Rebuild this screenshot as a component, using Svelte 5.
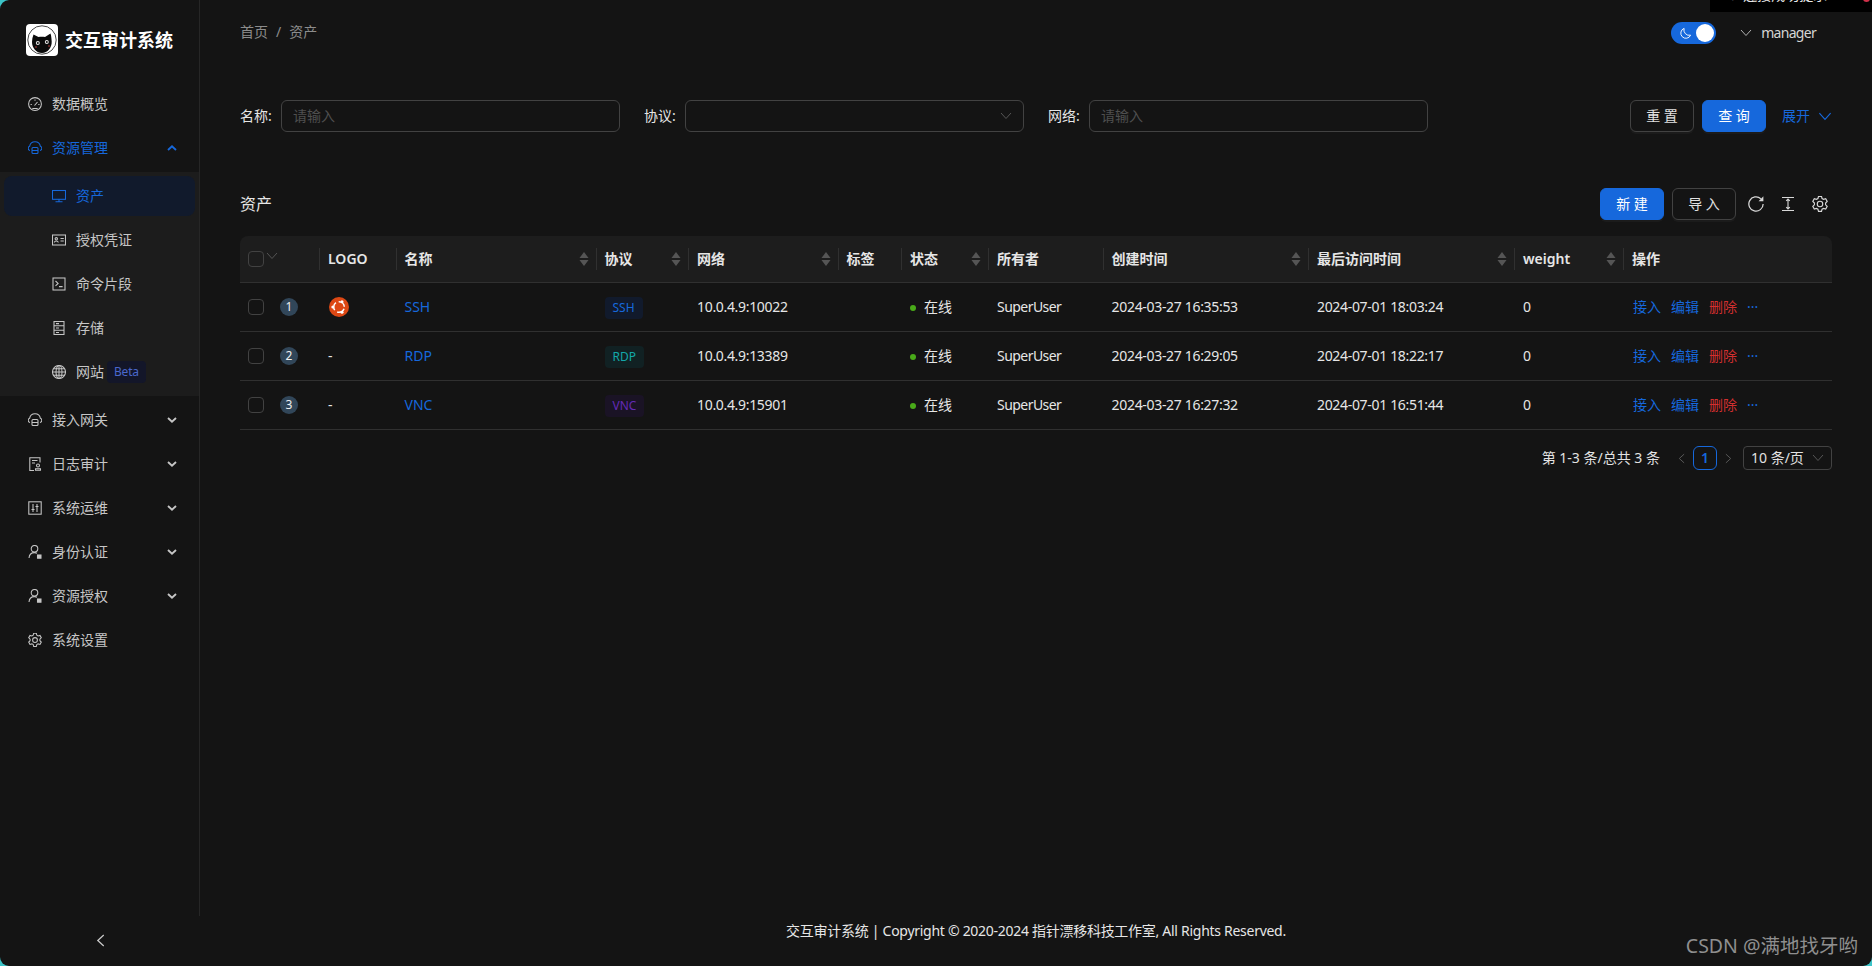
<script>
  const sub = [
    { label: '资产', icon: 'desktop', active: true },
    { label: '授权凭证', icon: 'idcard' },
    { label: '命令片段', icon: 'code' },
    { label: '存储', icon: 'storage' },
    { label: '网站', icon: 'globe', beta: true }
  ];
  const lower = [
    { label: '接入网关', icon: 'cloud', arrow: true },
    { label: '日志审计', icon: 'audit', arrow: true },
    { label: '系统运维', icon: 'control', arrow: true },
    { label: '身份认证', icon: 'user', arrow: true },
    { label: '资源授权', icon: 'user', arrow: true },
    { label: '系统设置', icon: 'gear' }
  ];
  const cols = [
    { w: 80, t: '' },
    { w: 76.5, t: 'LOGO' },
    { w: 200, t: '名称', s: 1 },
    { w: 92.5, t: '协议', s: 1 },
    { w: 149.5, t: '网络', s: 1 },
    { w: 63.5, t: '标签' },
    { w: 87, t: '状态', s: 1 },
    { w: 114.6, t: '所有者' },
    { w: 205.4, t: '创建时间', s: 1 },
    { w: 206, t: '最后访问时间', s: 1 },
    { w: 109, t: 'weight', s: 1 },
    { w: 208, t: '操作' }
  ];
  const rows = [
    { n: 1, name: 'SSH', logo: true, cls: 'ssh', addr: '10.0.4.9:10022', c: '2024-03-27 16:35:53', l: '2024-07-01 18:03:24' },
    { n: 2, name: 'RDP', cls: 'rdp', addr: '10.0.4.9:13389', c: '2024-03-27 16:29:05', l: '2024-07-01 18:22:17' },
    { n: 3, name: 'VNC', cls: 'vnc', addr: '10.0.4.9:15901', c: '2024-03-27 16:27:32', l: '2024-07-01 16:51:44' }
  ];
  const gearPath = 'M6.700 1.300h2.600l.5 1.900 1.300.7 1.900-.5 1.300 2.300-1.400 1.400v1.600l1.400 1.400-1.300 2.300-1.900-.5-1.300.7-.5 1.900H6.700l-.5-1.900-1.300-.7-1.900.5-1.300-2.300 1.400-1.400V7.100L1.700 5.700 3 3.400l1.900.5 1.300-.7z';
</script>

{#snippet icon(name)}
  <svg class="ic" viewBox="1 1 14 14" fill="none" stroke="currentColor" stroke-width="1.050">
    {#if name === 'gauge'}
      <circle cx="8" cy="8" r="6.400" /><path d="M7.500 9.500l3-3.500M3.600 8.500h1.200M11.300 8.500h1.200M8 3.500v1.200M5.300 12.500h5.400" />
    {:else if name === 'cloud'}
      <path d="M3 10.500a2.200 2.200 0 0 1-.4-4.200 5.500 5.500 0 0 1 10.800 0 2.200 2.200 0 0 1-.4 4.200" /><rect x="5" y="7.500" width="6" height="6" rx="1" /><path d="M5 10.500h6" />
    {:else if name === 'desktop'}
      <rect x="1.500" y="2.500" width="13" height="8.800" /><path d="M8 11.300v2.500M4.500 13.800h7" />
    {:else if name === 'idcard'}
      <rect x="1.500" y="3" width="13" height="10" /><circle cx="5.300" cy="6.800" r="1.200" /><path d="M3.300 10.500c.3-2 3.700-2 4 0M9.500 6.500h3.300M9.500 9h3.300" />
    {:else if name === 'code'}
      <rect x="2" y="2" width="12" height="12" /><path d="M4.500 5l2.600 2.400-2.600 2.400M8 10.600h3.600" />
    {:else if name === 'storage'}
      <rect x="3" y="1.500" width="10" height="13" /><path d="M3 5.800h10M3 10.200h10M5 3.600h3M5 8h3M5 12.400h3" />
    {:else if name === 'globe'}
      <circle cx="8" cy="8" r="6.500" /><ellipse cx="8" cy="8" rx="3" ry="6.500" /><path d="M1.500 8h13M2.400 4.800h11.200M2.400 11.200h11.200M8 1.500v13" />
    {:else if name === 'audit'}
      <path d="M13 6.500V1.800H2.800v12.700H7" /><path d="M5 4.500h5.500M5 7h3" /><circle cx="11" cy="9.500" r="1.500" /><path d="M8.500 14.300v-1.500h5v1.500z" />
    {:else if name === 'control'}
      <rect x="1.800" y="1.800" width="12.400" height="12.400" /><path d="M6 4v8M10 4v8M4.500 9.500h3M8.500 6.500h3" />
    {:else if name === 'user'}
      <circle cx="7.500" cy="4.800" r="3.300" /><path d="M2 14c.3-3.400 2.700-5.400 5.500-5.400 1 0 1.800.2 2.500.6" /><rect x="10.500" y="11" width="3.500" height="3.200" fill="currentColor" />
    {:else if name === 'gear'}
      <circle cx="8" cy="8" r="2.400" /><path d={gearPath} />
    {/if}
  </svg>
{/snippet}

{#snippet chevron(up)}
  <svg class="arrow" viewBox="0 0 10 6" fill="none" stroke="currentColor" stroke-width="1.900">
    <path d={up ? 'M1 5l4-3.600L9 5' : 'M1 1l4 3.600L9 1'} />
  </svg>
{/snippet}

{#snippet down(cls)}
  <svg class={cls} viewBox="0 0 12 8" fill="none" stroke="currentColor" stroke-width="1">
    <path d="M1 1l5 5.500L11 1" />
  </svg>
{/snippet}

<div class="app">
  <aside class="side">
    <div class="side-top">
      <div class="brand">
        <span class="logo">
          <svg viewBox="0 0 32 32" width="32" height="32">
            <circle cx="16" cy="16" r="14.200" fill="#fff" stroke="#333" stroke-width="0.900" />
            <path d="M7.500 10.500l5 2.500c2-.5 4.500-.5 6.500 0l5.500-3.500c1 3 1 6 1.200 8 .3 6-4 11.500-9.700 11.500S6 24 6 18c0-2.500.5-5 1.500-7.500z" fill="#0a0a0a" />
            <circle cx="11.800" cy="19" r="2" fill="#e8e8e8" /><circle cx="20.800" cy="18" r="2" fill="#e8e8e8" />
            <circle cx="11.800" cy="19" r="1" fill="#111" /><circle cx="20.800" cy="18" r="1" fill="#111" />
            <circle cx="10" cy="23" r="1" fill="#7a2a2a" /><circle cx="23" cy="22" r="1" fill="#7a2a2a" />
          </svg>
        </span>
        <span class="title">交互审计系统</span>
      </div>
      <nav class="nav">
        <div class="item">{@render icon('gauge')}<span>数据概览</span></div>
        <div class="item open">{@render icon('cloud')}<span>资源管理</span>{@render chevron(true)}</div>
        <div class="sub">
          {#each sub as s}
            <div class="item subitem" class:active={s.active}>
              {@render icon(s.icon)}<span>{s.label}</span>
              {#if s.beta}<span class="beta">Beta</span>{/if}
            </div>
          {/each}
        </div>
        {#each lower as m}
          <div class="item">
            {@render icon(m.icon)}<span>{m.label}</span>
            {#if m.arrow}{@render chevron(false)}{/if}
          </div>
        {/each}
      </nav>
    </div>
    <div class="collapse">
      <svg viewBox="0 0 8 12" width="9" height="13" fill="none" stroke="#c8c8c8" stroke-width="1.200"><path d="M7 1L1.500 6 7 11" /></svg>
    </div>
  </aside>

  <main class="main">
    <header class="top">
      <div class="crumb"><span>首页</span><span class="slash">/</span><span>资产</span></div>
      <div class="user">
        <span class="switch">
          <svg viewBox="0 0 14 14" width="13" height="13" fill="none" stroke="#fff" stroke-width="1"><path d="M5.500 1.500a5.500 5.500 0 1 0 7 7.300A5.800 5.800 0 0 1 5.500 1.500z" /></svg>
          <span class="knob"></span>
        </span>
        {@render down('uchev')}
        <span class="uname">manager</span>
      </div>
    </header>

    <form class="filters">
      <div class="field"><label for="f1">名称:</label><div id="f1" class="input ph">请输入</div></div>
      <div class="field"><label for="f2">协议:</label><div id="f2" class="input sel">{@render down('schev')}</div></div>
      <div class="field"><label for="f3">网络:</label><div id="f3" class="input ph">请输入</div></div>
      <div class="factions">
        <button type="button" class="btn">重 置</button>
        <button type="button" class="btn primary">查 询</button>
        <span class="expand">展开 {@render down('echev')}</span>
      </div>
    </form>

    <div class="toolbar">
      <span class="ttl">资产</span>
      <div class="tools">
        <button type="button" class="btn primary">新 建</button>
        <button type="button" class="btn">导 入</button>
        <svg class="tool" viewBox="1.500 1.500 13 13" fill="none" stroke="#d8d8d8" stroke-width="1"><path d="M13.800 8a5.800 5.800 0 1 1-1.900-4.300" /><path d="M14 1.800v3.900h-3.900z" fill="#d8d8d8" stroke-width="0" /></svg>
        <svg class="tool" viewBox="0 0 16 16" fill="none" stroke="#d8d8d8" stroke-width="1.100"><path d="M2 1.500h12M2 14.500h12M8 3v10M6.200 4.800L8 3l1.800 1.800M6.200 11.200L8 13l1.800-1.800" /></svg>
        <svg class="tool" viewBox="1 1 14 14" fill="none" stroke="#d8d8d8" stroke-width="1"><circle cx="8" cy="8" r="2.400" /><path d={gearPath} /></svg>
      </div>
    </div>

    <table class="table">
      <colgroup>
        {#each cols as c}<col style="width:{c.w}px" />{/each}
      </colgroup>
      <thead>
        <tr>
          {#each cols as c, i}
            <th class:sep={i > 0}>
              {#if i === 0}
                <div class="selhead"><span class="check"></span>{@render down('hchev')}</div>
              {:else}
                <div class="thc">
                  <span>{c.t}</span>
                  {#if c.s}
                    <svg class="sort" viewBox="0 0 10 14" fill="#555"><path d="M5 0l4.500 6H.5zM5 14L.5 8h9z" /></svg>
                  {/if}
                </div>
              {/if}
            </th>
          {/each}
        </tr>
      </thead>
      <tbody>
        {#each rows as r}
          <tr>
            <td><div class="selcell"><span class="check"></span><span class="num">{r.n}</span></div></td>
            <td>
              {#if r.logo}
                <svg class="ubuntu" viewBox="0 0 20 20">
                  <circle cx="10" cy="10" r="10" fill="#dd4814" />
                  <circle cx="10" cy="10" r="5.300" fill="none" stroke="#fff" stroke-width="1.500" stroke-dasharray="8.200 2.900" stroke-dashoffset="-1.800" />
                  <circle cx="3.800" cy="10" r="1.500" fill="#fff" /><circle cx="13" cy="4.700" r="1.500" fill="#fff" /><circle cx="13" cy="15.300" r="1.500" fill="#fff" />
                </svg>
              {:else}-{/if}
            </td>
            <td class="link">{r.name}</td>
            <td><span class="tag {r.cls}">{r.name}</span></td>
            <td class="lat">{r.addr}</td>
            <td></td>
            <td><span class="dot"></span>在线</td>
            <td class="lat su">SuperUser</td>
            <td class="lat">{r.c}</td>
            <td class="lat">{r.l}</td>
            <td class="lat">0</td>
            <td>
              <div class="ops"><span class="link">接入</span><span class="link">编辑</span><span class="del">删除</span><span class="link more">···</span></div>
            </td>
          </tr>
        {/each}
      </tbody>
    </table>

    <div class="pager">
      <span class="total">第 1-3 条/总共 3 条</span>
      <svg class="pg first" viewBox="0 0 8 12" fill="none" stroke="#5a5a5a" stroke-width="1.100"><path d="M7 1L1.500 6 7 11" /></svg>
      <span class="page">1</span>
      <svg class="pg" viewBox="0 0 8 12" fill="none" stroke="#5a5a5a" stroke-width="1.100"><path d="M1 1l5.500 5L1 11" /></svg>
      <span class="size">10 条/页{@render down('pchev')}</span>
    </div>

    <footer class="foot">交互审计系统 | Copyright © 2020-2024 指针漂移科技工作室, All Rights Reserved.</footer>
  </main>

  <div class="notice"><span>✓ 连接成功提示</span></div>
  <div class="mark">CSDN @满地找牙哟</div>
</div>

<style>
  :global(body) {
    margin: 0;
    background: #3cc4c8;
  }
  .app {
    position: relative;
    display: flex;
    width: 1872px;
    height: 966px;
    overflow: hidden;
    background: #141414;
    border-radius: 9px 0 9px 9px;
    color: #e2e2e2;
    font-family: "Noto Sans", "Noto Sans CJK SC", sans-serif;
    font-size: 14px;
    line-height: 22px;
  }
  .side {
    flex: 0 0 200px;
    display: flex;
    flex-direction: column;
  }
  .side-top {
    flex: 1;
    border-right: 1px solid #262626;
  }
  .brand {
    display: flex;
    align-items: center;
    gap: 7px;
    padding: 24px 0 28px 26px;
  }
  .logo {
    display: block;
    width: 32px;
    height: 32px;
    background: #fff;
    border-radius: 4px;
  }
  .logo svg { display: block; }
  .title {
    font-size: 18px;
    font-weight: 700;
    color: #fff;
  }
  .nav {
    display: flex;
    flex-direction: column;
    gap: 4px;
  }
  .item {
    display: flex;
    align-items: center;
    height: 40px;
    padding: 0 22px 0 28px;
    color: #c6c6c6;
  }
  .item > span:not(.beta) { margin-left: 10px; }
  .ic {
    width: 14px;
    height: 14px;
    flex: none;
  }
  .arrow {
    width: 10px;
    height: 6px;
    margin-left: auto;
    flex: none;
  }
  .open { color: #1668dc; }
  .sub {
    display: flex;
    flex-direction: column;
    gap: 4px;
    padding: 4px 0;
    background: #1c1c1c;
  }
  .subitem {
    margin: 0 4px;
    padding-left: 48px;
    border-radius: 8px;
  }
  .active {
    background: #111a2c;
    color: #1668dc;
  }
  .beta {
    margin-left: 3px;
    padding: 0 7px;
    border-radius: 4px;
    background: #131629;
    color: #4a68cc;
    font-size: 12px;
    line-height: 22px;
    letter-spacing: -0.2px;
  }
  .collapse {
    flex: 0 0 49px;
    display: flex;
    align-items: center;
    justify-content: center;
    padding-bottom: 1px;
  }
  .main {
    flex: 1;
    display: flex;
    flex-direction: column;
    padding: 0 40px;
    min-width: 0;
  }
  .top {
    display: flex;
    justify-content: space-between;
    align-items: center;
    height: 66px;
    margin-bottom: 34px;
  }
  .crumb {
    display: flex;
    gap: 8px;
    padding-bottom: 2px;
    color: #8c8c8c;
  }
  .user {
    display: flex;
    align-items: center;
    padding-right: 16px;
  }
  .switch {
    display: flex;
    align-items: center;
    justify-content: space-between;
    width: 45px;
    height: 22px;
    padding: 0 2px 0 8px;
    box-sizing: border-box;
    border-radius: 11px;
    background: #1668dc;
  }
  .knob {
    width: 18px;
    height: 18px;
    border-radius: 50%;
    background: #fff;
  }
  .uchev {
    width: 12px;
    height: 8px;
    margin: 0 9px 0 24px;
    color: #b0b0b0;
  }
  .uname {
    color: #d4d4d4;
    letter-spacing: -0.7px;
  }
  .filters {
    display: flex;
    gap: 24px;
    height: 32px;
    margin-bottom: 56px;
  }
  .field {
    display: flex;
    align-items: center;
    width: 380px;
  }
  .field label {
    width: 41px;
    flex: none;
    color: #e6e6e6;
  }
  .input {
    flex: 1;
    height: 32px;
    box-sizing: border-box;
    padding: 4px 11px;
    border: 1px solid #424242;
    border-radius: 6px;
  }
  .ph { color: #4f4f4f; }
  .sel {
    display: flex;
    align-items: center;
    justify-content: flex-end;
  }
  .schev {
    width: 12px;
    height: 8px;
    color: #555;
  }
  .factions {
    margin-left: auto;
    display: flex;
    align-items: center;
    gap: 8px;
  }
  .btn {
    width: 64px;
    height: 32px;
    padding: 0;
    box-sizing: border-box;
    border: 1px solid #424242;
    border-radius: 6px;
    background: transparent;
    color: #e2e2e2;
    font: inherit;
    box-shadow: 0 2px 0 rgba(255, 255, 255, 0.03);
  }
  .primary {
    background: #1668dc;
    border-color: #1668dc;
    color: #fff;
  }
  .expand {
    display: flex;
    align-items: center;
    gap: 8px;
    margin-left: 8px;
    color: #1668dc;
  }
  .echev {
    width: 14px;
    height: 9px;
  }
  .toolbar {
    display: flex;
    justify-content: space-between;
    align-items: center;
    height: 32px;
    margin-bottom: 16px;
  }
  .ttl {
    font-size: 16px;
    color: #e6e6e6;
  }
  .tools {
    display: flex;
    align-items: center;
    gap: 8px;
    padding-right: 4px;
  }
  .tool {
    width: 16px;
    height: 16px;
    margin-left: 8px;
  }
  .tools .btn + .tool { margin-left: 4px; }
  .table {
    width: 1592px;
    table-layout: fixed;
    border-collapse: separate;
    border-spacing: 0;
  }
  th {
    position: relative;
    height: 47px;
    padding: 0 8px;
    box-sizing: border-box;
    background: #1d1d1d;
    border-bottom: 1px solid #303030;
    font-weight: 600;
    text-align: left;
    color: #e6e6e6;
  }
  th:first-child { border-top-left-radius: 8px; }
  th:last-child { border-top-right-radius: 8px; }
  .sep::before {
    content: "";
    position: absolute;
    left: -1px;
    top: 12px;
    width: 1px;
    height: 22px;
    background: #303030;
  }
  .thc {
    display: flex;
    align-items: center;
    justify-content: space-between;
  }
  .sort {
    width: 10px;
    height: 14px;
  }
  .selhead, .selcell {
    display: flex;
    align-items: center;
  }
  .hchev {
    width: 12px;
    height: 8px;
    margin: -6px 0 0 2px;
    color: #555;
  }
  .check {
    width: 16px;
    height: 16px;
    box-sizing: border-box;
    border: 1px solid #424242;
    border-radius: 4px;
    flex: none;
  }
  td {
    height: 49px;
    padding: 0 8px;
    box-sizing: border-box;
    border-bottom: 1px solid #303030;
    color: #e6e6e6;
    white-space: nowrap;
  }
  .selcell { gap: 16px; }
  .num {
    width: 18px;
    height: 18px;
    border-radius: 50%;
    background: #314659;
    color: #f0f0f0;
    font-size: 12px;
    line-height: 18px;
    text-align: center;
  }
  .ubuntu {
    display: block;
    width: 20px;
    height: 20px;
    margin-left: 1px;
  }
  .link { color: #1668dc; }
  .lat { letter-spacing: -0.32px; }
  .su { letter-spacing: -0.55px; }
  .tag {
    display: inline-block;
    padding: 0 8px;
    border-radius: 4px;
    font-size: 12px;
    line-height: 22px;
  }
  .ssh { background: #111a2c; color: #1668dc; }
  .rdp { background: #112123; color: #13a8a8; }
  .vnc { background: #1a1325; color: #642ab5; }
  .dot {
    display: inline-block;
    width: 6px;
    height: 6px;
    margin: 0 8px 1px 0;
    border-radius: 50%;
    background: #49aa19;
    vertical-align: middle;
  }
  .ops {
    display: flex;
    gap: 10px;
    margin-left: 1px;
  }
  .del { color: #d32f2f; }
  .pager {
    display: flex;
    align-items: center;
    justify-content: flex-end;
    height: 24px;
    margin-top: 16px;
    color: #e2e2e2;
  }
  .total { margin-right: 10px; }
  .pg {
    width: 7px;
    height: 11px;
    margin: 0 8px;
  }
  .page {
    width: 24px;
    height: 24px;
    box-sizing: border-box;
    border: 1px solid #1668dc;
    border-radius: 6px;
    color: #1668dc;
    font-weight: 600;
    line-height: 22px;
    text-align: center;
  }
  .size {
    display: flex;
    align-items: center;
    justify-content: space-between;
    width: 89px;
    height: 24px;
    margin-left: 3px;
    padding: 0 7px;
    box-sizing: border-box;
    border: 1px solid #424242;
    border-radius: 4px;
  }
  .pchev {
    width: 12px;
    height: 8px;
    color: #555;
  }
  .foot {
    margin-top: auto;
    padding-bottom: 24px;
    text-align: center;
    color: #e6e6e6;
    letter-spacing: -0.28px;
  }
  .notice {
    position: absolute;
    top: 0;
    right: 0;
    width: 162px;
    height: 12px;
    overflow: hidden;
    background: #000;
    color: #e8e8e8;
  }
  .notice::after {
    content: "";
    position: absolute;
    right: 2px;
    top: -5px;
    width: 7px;
    height: 7px;
    border-radius: 50%;
    background: #d0304a;
  }
  .notice span {
    position: absolute;
    left: 20px;
    top: -16px;
    white-space: nowrap;
  }
  .mark {
    position: absolute;
    right: 14px;
    bottom: 8px;
    color: #8f8f8f;
    font-size: 19.500px;
    line-height: 24px;
  }
</style>
